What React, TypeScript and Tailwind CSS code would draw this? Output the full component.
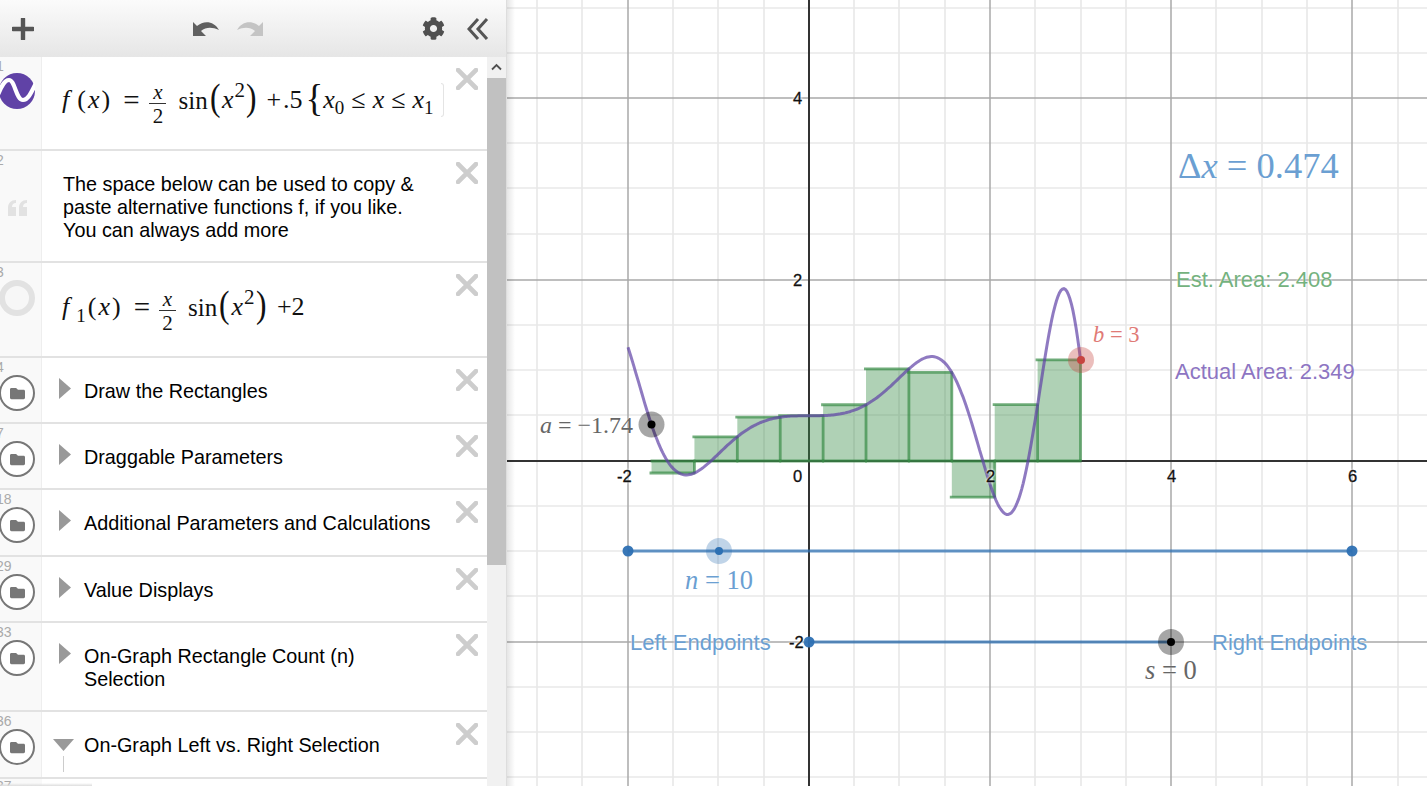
import type { ReactNode } from "react";
import { FaCog, FaFolder } from "react-icons/fa";

const sans = "font-['Liberation_Sans',Arial,sans-serif]";
const serif = "font-['Liberation_Serif','Times_New_Roman',serif]";

// graph helpers, page coordinates
const ox = 809;
const oy = 461;
const unit = 90.5;
const px = (x: number) => ox + x * unit;
const py = (y: number) => oy - y * unit;
const f = (x: number) => (x / 2) * Math.sin(x * x) + 0.5;

function curvePath() {
  let d = "";
  for (let i = 0; i <= 300; i++) {
    const x = -2 + (5 * i) / 300;
    d += `${i === 0 ? "M" : "L"}${px(x).toFixed(1)} ${py(f(x)).toFixed(1)} `;
  }
  return d;
}

const a = -1.74;
const dx = 0.474;
const rects = Array.from({ length: 10 }, (_, i) => {
  const right = a + (i + 1) * dx;
  const h = f(right);
  return { x: px(a + i * dx), w: dx * unit, top: py(Math.max(h, 0)), bottom: py(Math.min(h, 0)), edge: py(h) };
});

const minorX = [537, 582, 673, 718, 764, 854, 899, 945, 1035, 1081, 1126, 1216, 1262, 1307, 1398];
const majorX = [628, 990, 1171, 1352];
const minorY = [8, 53, 143, 188, 234, 325, 370, 415, 506, 551, 596, 687, 732, 777];
const majorY = [98, 280, 642];

function Graph() {
  return (
    <div className="relative flex-1 h-full overflow-hidden bg-white">
      <svg className="w-full h-full block" viewBox="507 0 920 786">
        {minorX.map((x) => (
          <line key={x} x1={x} x2={x} y1={0} y2={786} stroke="#e8e8e8" strokeWidth={1.6} />
        ))}
        {minorY.map((y) => (
          <line key={y} x1={507} x2={1427} y1={y} y2={y} stroke="#e8e8e8" strokeWidth={1.6} />
        ))}
        {majorX.map((x) => (
          <line key={x} x1={x} x2={x} y1={0} y2={786} stroke="#a8a8a8" strokeWidth={1.5} />
        ))}
        {majorY.map((y) => (
          <line key={y} x1={507} x2={1427} y1={y} y2={y} stroke="#a8a8a8" strokeWidth={1.5} />
        ))}
        <line x1={809} x2={809} y1={0} y2={786} stroke="#333" strokeWidth={2} />
        <line x1={507} x2={1427} y1={461} y2={461} stroke="#333" strokeWidth={2} />

        {rects.map((r) => (
          <rect key={r.x} x={r.x} y={r.top} width={r.w} height={r.bottom - r.top} fill="#388c46" fillOpacity={0.4} />
        ))}
        {rects.map((r) => (
          <g key={r.x} stroke="#388c46" strokeOpacity={0.7} strokeWidth={2.8}>
            <line x1={r.x + r.w} x2={r.x + r.w} y1={r.top} y2={r.bottom} />
            <line x1={r.x - 2} x2={r.x + r.w + 1} y1={r.edge} y2={r.edge} />
            <line x1={r.x - 1} x2={r.x + r.w + 1} y1={461} y2={461} />
          </g>
        ))}

        <path d={curvePath()} fill="none" stroke="#6042a6" strokeOpacity={0.7} strokeWidth={3} />

        {/* sliders */}
        <line x1={628} x2={1352} y1={551} y2={551} stroke="#2d70b3" strokeOpacity={0.75} strokeWidth={3.2} />
        <line x1={809} x2={1171} y1={642} y2={642} stroke="#2d70b3" strokeOpacity={0.75} strokeWidth={3.2} />
        <circle cx={628} cy={551} r={5.5} fill="#2d70b3" fillOpacity={0.95} />
        <circle cx={1352} cy={551} r={5.5} fill="#2d70b3" fillOpacity={0.95} />
        <circle cx={809} cy={642} r={5.5} fill="#2d70b3" fillOpacity={0.95} />
        <circle cx={719} cy={551} r={13} fill="#2d70b3" fillOpacity={0.3} />
        <circle cx={719} cy={551} r={4} fill="#2d70b3" />
        <circle cx={1171} cy={642} r={13} fill="#000" fillOpacity={0.35} />
        <circle cx={1171} cy={642} r={4} fill="#000" />
        <circle cx={651.5} cy={424.5} r={13} fill="#000" fillOpacity={0.35} />
        <circle cx={651.5} cy={424.5} r={4} fill="#000" />
        <circle cx={1081} cy={360} r={13} fill="#c74440" fillOpacity={0.35} />
        <circle cx={1081} cy={360} r={4} fill="#c74440" />
      </svg>

      {/* fade under the list edge */}
      <div className="absolute left-0 top-0 bottom-0 w-2 bg-gradient-to-r from-black/10 to-transparent" />

      {/* axis numbers */}
      <AxisNum cls="left-[110px] top-[466px]">-2</AxisNum>
      <AxisNum cls="left-[286px] top-[466px]">0</AxisNum>
      <AxisNum cls="left-[479px] top-[466px]">2</AxisNum>
      <AxisNum cls="left-[660px] top-[466px]">4</AxisNum>
      <AxisNum cls="left-[841px] top-[466px]">6</AxisNum>
      <AxisNum cls="left-[286px] top-[88px]">4</AxisNum>
      <AxisNum cls="left-[286px] top-[270px]">2</AxisNum>
      <AxisNum cls="left-[282px] top-[632px]">-2</AxisNum>

      {/* labels */}
      <Label cls={`left-[33px] top-[413px] text-[24px] text-[#666] ${serif}`}>
        <i>a</i> = −1.74
      </Label>
      <Label cls={`left-[586px] top-[323px] text-[22.5px] text-[#e07a76] ${serif}`}>
        <i>b</i> = 3
      </Label>
      <Label cls={`left-[178px] top-[568px] text-[26.5px] text-[#6b9fd2] ${serif}`}>
        <i>n</i> = 10
      </Label>
      <Label cls={`left-[638px] top-[658px] text-[26.5px] text-[#666] ${serif}`}>
        <i>s</i> = 0
      </Label>
      <Label cls={`left-[671px] top-[154px] text-[36.5px] text-[#6b9fd2] ${serif}`}>
        Δ<i>x</i> = 0.474
      </Label>
      <Label cls={`left-[123px] top-[631px] text-[22px] text-[#6b9fd2] ${sans}`}>Left Endpoints</Label>
      <Label cls={`left-[705px] top-[631px] text-[22px] text-[#6b9fd2] ${sans}`}>Right Endpoints</Label>
      <Label cls={`left-[669px] top-[268px] text-[22px] text-[#74b27e] ${sans}`}>Est. Area: 2.408</Label>
      <Label cls={`left-[668px] top-[360px] text-[22px] text-[#8d75c2] ${sans}`}>Actual Area: 2.349</Label>
    </div>
  );
}

function AxisNum({ cls, children }: { cls: string; children: ReactNode }) {
  return (
    <span className={`absolute text-[16.5px] leading-[20px] text-[#111] [-webkit-text-stroke:0.3px_#111] [text-shadow:0_0_3px_#fff,0_0_3px_#fff] ${sans} ${cls}`}>
      {children}
    </span>
  );
}

function Label({ cls, children }: { cls: string; children: ReactNode }) {
  return <span className={`absolute whitespace-nowrap leading-[24px] [text-shadow:0_0_2px_#fff] ${cls}`}>{children}</span>;
}

function CloseX() {
  return (
    <svg className="absolute right-[9px] top-[11px] w-[22px] h-[22px]" viewBox="0 0 22 22">
      <path d="M2 2 L20 20 M20 2 L2 20" stroke="#cdcdcd" strokeWidth={4.6} strokeLinecap="square" fill="none" />
    </svg>
  );
}

function FolderIcon() {
  return (
    <div className="w-9 h-9 rounded-full border-2 border-[#777] flex items-center justify-center bg-white">
      <FaFolder className="text-[#777] w-[15px] h-[15px]" />
    </div>
  );
}

function FnIcon() {
  return (
    <svg className="w-9 h-9" viewBox="0 0 36 36">
      <circle cx="18" cy="18" r="18" fill="#6042a6" />
      <path d="M-2 24 C2 14 5 7 10 7 C16 7 17 27 24 27 C29 27 32 20 37 10" fill="none" stroke="#fff" strokeWidth={4.2} />
    </svg>
  );
}

function QuoteIcon() {
  return (
    <svg className="w-[19px] h-[16px] ml-[9px]" viewBox="0 0 19 16" fill="#e2e2e2">
      <path d="M0 16 V8 C0 3 3 0 8 0 V3 C5 3 4 5 4 7 H8 V16 Z" />
      <path d="M11 16 V8 C11 3 14 0 19 0 V3 C16 3 15 5 15 7 H19 V16 Z" />
    </svg>
  );
}

function Row({
  num,
  height,
  icon,
  iconCls,
  children,
}: {
  num: number;
  height: string;
  icon: ReactNode;
  iconCls: string;
  children: ReactNode;
}) {
  return (
    <div className={`relative flex border-b-2 border-[#e2e2e2] bg-white ${height}`}>
      <div className="w-[42px] shrink-0 bg-[#f9f9f9] border-r border-[#eeeeee] overflow-hidden">
        <div className={`-ml-[4px] pt-[2px] h-[16px] text-[14px] leading-[14px] text-[#aaaaaa] ${sans}`}>{num}</div>
        <div className={`-ml-px ${iconCls}`}>{icon}</div>
      </div>
      <div className="flex-1 min-w-0 relative">{children}</div>
      <CloseX />
    </div>
  );
}

function Folder({ label, open }: { label: ReactNode; open?: boolean }) {
  return (
    <div className="flex pt-[22px]">
      <div className="w-[42px] shrink-0 pl-[11px]">
        {open ? (
          <div className="flex flex-col items-start">
            <svg className="w-[21px] h-[12px] mt-[5px]" viewBox="0 0 21 12">
              <path d="M0 0 H21 L10.5 12 Z" fill="#999" />
            </svg>
            <div className="w-px h-[16px] bg-[#ccc] ml-[10px] mt-[5px]" />
          </div>
        ) : (
          <svg className="w-[12px] h-[21px] ml-[6px] -mt-[2px]" viewBox="0 0 12 21">
            <path d="M0 0 L12 10.5 L0 21 Z" fill="#999" />
          </svg>
        )}
      </div>
      <div className={`text-[19.8px] leading-[23px] text-black w-[360px] ${label === "On-Graph Rectangle Count (n) Selection" ? "max-w-[330px]" : ""} ${sans}`}>{label}</div>
    </div>
  );
}

function Frac({ top, bottom }: { top: ReactNode; bottom: ReactNode }) {
  return (
    <span className="inline-flex flex-col items-center w-[17px] text-[21px] leading-[21px] translate-y-[4px]">
      <i>{top}</i>
      <span className="self-stretch border-t border-[#333] pt-[2px] text-center">{bottom}</span>
    </span>
  );
}

function Paren({ children }: { children: string }) {
  return <span className="text-[37px] leading-none font-light scale-x-[0.85] -translate-y-[3px]">{children}</span>;
}

function SinPart() {
  return (
    <>
      <span className="ml-[12px] mr-[1px] text-[25px]">sin</span>
      <Paren>(</Paren>
      <i className="ml-[1px]">x</i>
      <span className="text-[21px] leading-none -translate-y-[10px] ml-[1px]">2</span>
      <Paren>)</Paren>
    </>
  );
}

function FormulaOne() {
  return (
    <div className={`absolute left-[20px] top-[19px] flex items-center h-[48px] text-[26px] leading-none text-[#111] whitespace-nowrap ${serif}`}>
      <i>f</i>
      <span className="ml-[8px]">(</span>
      <i className="ml-[2px]">x</i>
      <span className="ml-[2px]">)</span>
      <span className="ml-[13px] mr-[10px] text-[29px]">=</span>
      <Frac top="x" bottom="2" />
      <SinPart />
      <span className="ml-[9px]">+</span>
      <span className="ml-[2px]">.5</span>
      <span className="ml-[3px] text-[37px] font-light -translate-y-[2px]">{"{"}</span>
      <i>x</i>
      <span className="text-[19px] translate-y-[7px]">0</span>
      <span className="mx-[7px]">≤</span>
      <i>x</i>
      <span className="mx-[7px]">≤</span>
      <i>x</i>
      <span className="text-[19px] translate-y-[7px]">1</span>
      {/* faint closing edge of the brace field */}
      <span className="ml-[7px] w-[3px] h-[34px] border-r border-y border-[#e4e4e4] rounded-r-[3px]" />
    </div>
  );
}

function FormulaTwo() {
  return (
    <div className={`absolute left-[20px] top-[20px] flex items-center h-[48px] text-[26px] leading-none text-[#111] whitespace-nowrap ${serif}`}>
      <i>f</i>
      <span className="text-[19px] translate-y-[8px] ml-[7px]">1</span>
      <span className="ml-[2px]">(</span>
      <i className="ml-[2px]">x</i>
      <span className="ml-[2px]">)</span>
      <span className="ml-[13px] mr-[9px] text-[29px]">=</span>
      <Frac top="x" bottom="2" />
      <SinPart />
      <span className="ml-[10px]">+2</span>
    </div>
  );
}

function Sidebar() {
  const folderIcon = <FolderIcon />;
  const folderCls = "mt-[1px]";
  return (
    <div className="w-[507px] h-full shrink-0 flex flex-col border-r border-[#dddddd] relative z-10">
      <div className="h-[57px] shrink-0 flex items-center bg-gradient-to-b from-[#fbfbfb] to-[#e6e6e6]">
        <svg className="ml-[12px] w-[22px] h-[22px]" viewBox="0 0 22 22">
          <path d="M11 1 V21 M1 11 H21" stroke="#555" strokeWidth={4.4} strokeLinecap="round" />
        </svg>
        <svg className="ml-[158px] w-[27px] h-[17px]" viewBox="0 0 27 17">
          <path d="M1 2 V16 H14 L9 11 C14 7 20 7 27 10 C22 1 12 0 5 6 Z" fill="#606060" />
        </svg>
        <svg className="ml-[18px] w-[27px] h-[17px]" viewBox="0 0 27 17">
          <path d="M26 2 V16 H13 L18 11 C13 7 7 7 0 10 C5 1 15 0 22 6 Z" fill="#c4c4c4" />
        </svg>
        <FaCog className="ml-[158px] w-[23px] h-[23px] text-[#505050]" />
        <svg className="ml-[22px] w-[22px] h-[24px]" viewBox="0 0 22 24">
          <path d="M11 2 L2 12 L11 22 M20 2 L11 12 L20 22" fill="none" stroke="#555" strokeWidth={3} />
        </svg>
      </div>
      <div className="flex-1 flex min-h-0">
        <div className="flex-1 min-w-0 overflow-hidden relative">
          <Row num={1} height="h-[94px]" icon={<FnIcon />} iconCls="mt-0">
            <FormulaOne />
          </Row>
          <Row num={2} height="h-[112px]" icon={<QuoteIcon />} iconCls="mt-[33px]">
            <div className={`pl-[21px] pt-[22px] w-[380px] text-[19.8px] leading-[23px] text-black ${sans}`}>
              The space below can be used to copy &amp; paste alternative functions f, if you like. You can always add more
            </div>
          </Row>
          <Row num={3} height="h-[95px]" icon={<div className="w-9 h-9 rounded-full border-[6px] border-[#e2e2e2] bg-[#f7f7f7]" />} iconCls="mt-[1px]">
            <FormulaTwo />
          </Row>
          <Row num={4} height="h-[66px]" icon={folderIcon} iconCls={folderCls}>
            <Folder label="Draw the Rectangles" />
          </Row>
          <Row num={7} height="h-[66px]" icon={folderIcon} iconCls={folderCls}>
            <Folder label="Draggable Parameters" />
          </Row>
          <Row num={18} height="h-[67px]" icon={folderIcon} iconCls={folderCls}>
            <Folder label="Additional Parameters and Calculations" />
          </Row>
          <Row num={29} height="h-[66px]" icon={folderIcon} iconCls={folderCls}>
            <Folder label="Value Displays" />
          </Row>
          <Row num={33} height="h-[89px]" icon={folderIcon} iconCls={folderCls}>
            <Folder label="On-Graph Rectangle Count (n) Selection" />
          </Row>
          <Row num={36} height="h-[67px]" icon={folderIcon} iconCls={folderCls}>
            <Folder open label="On-Graph Left vs. Right Selection" />
          </Row>
          <div className={`h-[10px] -ml-[4px] text-[14px] leading-[14px] text-[#aaaaaa] bg-[#f9f9f9] w-[46px] ${sans}`}>37</div>
          <div className="absolute left-0 bottom-0 w-[92px] h-[3px] bg-gradient-to-b from-transparent to-[#dddddd]" />
        </div>
        <div className="w-[19px] shrink-0 bg-[#f1f1f1] relative">
          <svg className="ml-[4px] mt-[6px] w-[11px] h-[8px]" viewBox="0 0 11 8">
            <path d="M1 6.5 L5.5 2 L10 6.5" fill="none" stroke="#505050" strokeWidth={1.8} />
          </svg>
          <div className="mt-[7px] h-[487px] bg-[#c1c1c1]" />
        </div>
      </div>
    </div>
  );
}

export default function App() {
  return (
    <div className="w-[1427px] h-[786px] flex overflow-hidden bg-white">
      <Sidebar />
      <Graph />
    </div>
  );
}
